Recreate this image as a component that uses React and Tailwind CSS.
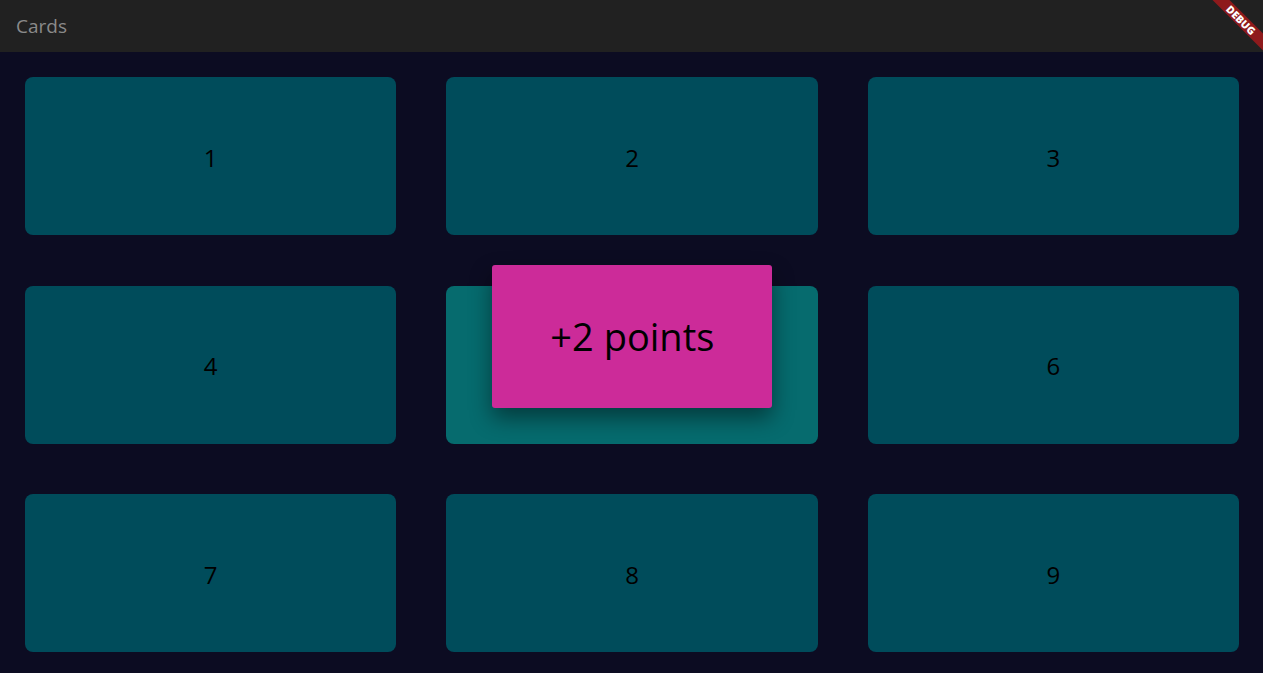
import React from 'react';

const CARDS = [1, 2, 3, 4, 5, 6, 7, 8, 9];

export default function App() {
  return (
    <div className="w-[1263px] h-[673px] overflow-hidden bg-[#0c0c22] flex flex-col" style={{ fontFamily: '"Open Sans", "Noto Sans", sans-serif' }}>
      {/* App bar */}
      <header className="relative h-[52px] shrink-0 bg-[#212121] flex items-center px-4 overflow-hidden">
        <h1 className="text-[19px] text-[#8a8a8a]">Cards</h1>
        {/* debug ribbon */}
        <div className="absolute top-[14px] right-[-33px] w-[110px] h-[12px] rotate-45 bg-[#8e1a1c] flex items-center justify-center">
          <span className="text-[10.5px] font-extrabold leading-none text-white">DEBUG</span>
        </div>
      </header>

      {/* Grid */}
      <div className="grid grid-cols-3 gap-x-[50px] gap-y-[50.5px] pl-[25px] pr-[24px] pt-[25px]">
        {CARDS.map((n) => (
          <Card key={n} n={n} active={n === 5} />
        ))}
      </div>
    </div>
  );
}

function Card({ n, active }) {
  if (active) {
    return (
      <div className="relative h-[158px] rounded-lg bg-[#066b6e]">
        <div className="absolute left-[46px] top-[-21px] w-[280px] h-[143px] rounded-[3px] bg-[#cc2b99] flex items-center justify-center pt-[1px] shadow-[0_10px_22px_rgba(0,0,0,0.45)]">
          <span className="text-[38px] text-black">+2 points</span>
        </div>
      </div>
    );
  }
  return (
    <div className="h-[158px] rounded-lg bg-[#004c5b] flex items-center justify-center pt-[3px]">
      <span className="text-[24px] text-black">{n}</span>
    </div>
  );
}
